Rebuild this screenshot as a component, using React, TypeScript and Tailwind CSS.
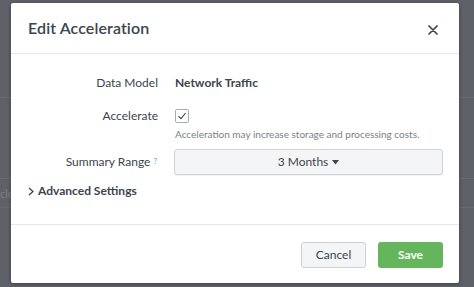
import React from "react";

export default function App() {
  const font = { fontFamily: "Lato, 'Open Sans', sans-serif" };
  return (
    <div className="relative w-[474px] h-[287px] bg-[#5e6268] overflow-hidden" style={font}>
      {/* background page hints */}
      <div className="absolute left-0 right-0 top-[97px] h-px bg-[#686c72]" />
      <div className="absolute left-0 right-0 top-[178px] h-px bg-[#686c72]" />
      <div className="absolute left-0 right-0 top-[207px] h-px bg-[#686c72]" />
      <div className="absolute left-0 top-[186px] text-[11px] text-[#7c8087]">cle</div>

      <div className="absolute left-[11px] top-[3px] w-[448px] h-[280px] bg-white rounded-[2px] shadow-[0_1px_4px_rgba(0,0,0,0.35)] flex flex-col">
        {/* header */}
        <div className="h-[51px] flex items-center justify-between pl-[17px] pr-[21px] border-b border-[#e8e8e8]">
          <div className="text-[16px] font-semibold text-[#3c444d] tracking-[0.1px] mt-[-1px]">Edit Acceleration</div>
          <svg width="10" height="10" viewBox="0 0 10 10" className="mt-[3px]">
            <path d="M1 1 L9 9 M9 1 L1 9" stroke="#3c444d" strokeWidth="1.7" strokeLinecap="round" />
          </svg>
        </div>

        {/* body */}
        <div className="flex-1 pt-[19px] pl-[17px] pr-[16px]">
          <div className="flex items-center h-[20px]">
            <div className="w-[130px] text-right text-[12px] text-[#3c444d]">Data Model</div>
            <div className="ml-[17px] text-[12px] font-bold text-[#3c444d]">Network Traffic</div>
          </div>
          <div className="flex mt-[13px]">
            <div className="w-[130px] text-right text-[12px] text-[#3c444d] leading-[20px]">Accelerate</div>
            <div className="ml-[17px] flex flex-col">
              <div className="mt-[3px] w-[14px] h-[14px] border border-[#a7acb2] rounded-[2px] bg-white flex items-center justify-center">
                <svg width="10" height="10" viewBox="0 0 10 10">
                  <path d="M1.5 5.2 L4 7.6 L8.6 2" fill="none" stroke="#3c444d" strokeWidth="1.1" />
                </svg>
              </div>
              <div className="mt-[4px] text-[10px] text-[#7a8087] leading-[14px] whitespace-nowrap">Acceleration may increase storage and processing costs.</div>
            </div>
          </div>
          <div className="flex items-center mt-[8px]">
            <div className="w-[130px] text-right text-[12px] text-[#3c444d] pr-[1px]">
              Summary Range<sup className="text-[8px] text-[#5a9fd4] ml-[3px] relative top-[-2px]">?</sup>
            </div>
            <div className="ml-[16px] w-[269px] h-[26px] rounded-[3px] border border-[#cfd2d6] bg-[#f4f5f6] shadow-[0_1px_1px_rgba(0,0,0,0.06)] flex items-center justify-center text-[12px] text-[#3c444d]">
              3 Months
              <svg width="7" height="5" viewBox="0 0 7 5" className="ml-[4px]">
                <path d="M0 0 L7 0 L3.5 4.5 Z" fill="#3c444d" />
              </svg>
            </div>
          </div>
          <div className="flex items-center mt-[7px] h-[18px]">
            <svg width="6" height="9" viewBox="0 0 6 9" className="mr-[4px]">
              <path d="M1 1 L5 4.5 L1 8" fill="none" stroke="#3c444d" strokeWidth="1.3" />
            </svg>
            <span className="text-[12px] font-bold text-[#3c444d]">Advanced Settings</span>
          </div>
        </div>

        {/* footer */}
        <div className="h-[59px] border-t border-[#e8e8e8] flex items-start justify-end gap-[12px] pr-[16px] pt-[17px]">
          <button className="w-[65px] h-[26px] rounded-[3px] border border-[#cdd0d4] bg-[#f4f5f6] text-[12px] text-[#3c444d]">Cancel</button>
          <button className="w-[65px] h-[26px] rounded-[3px] bg-[#65b55c] text-[12px] font-bold text-white">Save</button>
        </div>
      </div>
    </div>
  );
}
